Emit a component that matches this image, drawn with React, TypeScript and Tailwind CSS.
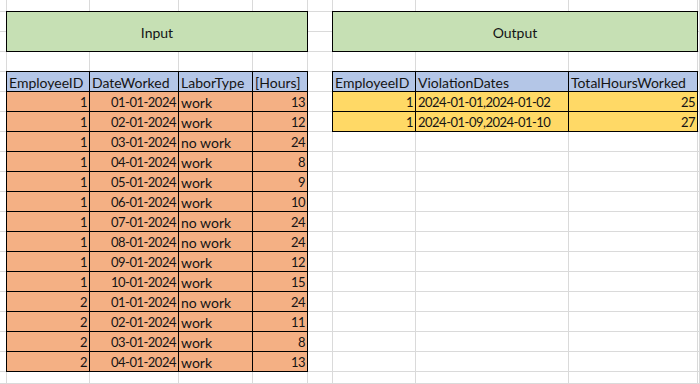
import React from "react";

const inputRows: [number, string, string, number][] = [
  [1, "01-01-2024", "work", 13],
  [1, "02-01-2024", "work", 12],
  [1, "03-01-2024", "no work", 24],
  [1, "04-01-2024", "work", 8],
  [1, "05-01-2024", "work", 9],
  [1, "06-01-2024", "work", 10],
  [1, "07-01-2024", "no work", 24],
  [1, "08-01-2024", "no work", 24],
  [1, "09-01-2024", "work", 12],
  [1, "10-01-2024", "work", 15],
  [2, "01-01-2024", "no work", 24],
  [2, "02-01-2024", "work", 11],
  [2, "03-01-2024", "work", 8],
  [2, "04-01-2024", "work", 13],
];

const outputRows: [number, string, number][] = [
  [1, "2024-01-01,2024-01-02", 25],
  [1, "2024-01-09,2024-01-10", 27],
];

const cell = "border-r border-b border-black px-[2px] pt-px leading-[19px] whitespace-nowrap overflow-hidden";
// Lato digits run wider than the sheet's font, so numbers get a touch smaller and tighter
const num = "text-[13px] tracking-[-0.5px]";

const App: React.FC = () => {
  // background gridlines: 10 columns x 20 rows
  const gridCells = [];
  for (let r = 0; r < 20; r++) {
    for (let c = 0; c < 10; c++) {
      gridCells.push(
        <div
          key={`${r}-${c}`}
          className="border-r border-b border-[#dadada]"
          style={{ gridRow: r + 1, gridColumn: c + 1 }}
        />
      );
    }
  }

  return (
    <div
      className="w-[700px] h-[384px] overflow-hidden bg-white text-[#141414] text-[14px] grid grid-cols-[7px_83px_89px_74px_55px_25px_83px_153px_129px_2px] grid-rows-[12px_repeat(18,20px)_12px]"
      style={{ fontFamily: "Lato, 'Open Sans', sans-serif" }}
    >
      {gridCells}

      {/* Title boxes */}
      <div className="row-start-2 row-end-4 col-start-2 col-end-6 -ml-px -mt-px border border-black bg-[#c6e0b4] flex items-center justify-center pt-px">
        Input
      </div>
      <div className="row-start-2 row-end-4 col-start-7 col-end-10 -ml-px -mt-px border border-black bg-[#c6e0b4] flex items-center justify-center pt-px">
        Output
      </div>

      {/* Input table */}
      <div className="row-start-5 row-end-20 col-start-2 col-end-6 -ml-px -mt-px border-l border-t border-black grid grid-cols-[83px_89px_74px_55px] auto-rows-[20px]">
        {["EmployeeID", "DateWorked", "LaborType", "[Hours]"].map((h) => (
          <div key={h} className={`${cell} bg-[#b4c6e7]`}>
            {h}
          </div>
        ))}
        {inputRows.map((row, i) => (
          <React.Fragment key={i}>
            <div className={`${cell} ${num} bg-[#f4b084] text-right`}>{row[0]}</div>
            <div className={`${cell} ${num} bg-[#f4b084] text-right`}>{row[1]}</div>
            <div className={`${cell} bg-[#f4b084]`}>{row[2]}</div>
            <div className={`${cell} ${num} bg-[#f4b084] text-right`}>{row[3]}</div>
          </React.Fragment>
        ))}
      </div>

      {/* Output table */}
      <div className="row-start-5 row-end-8 col-start-7 col-end-10 -ml-px -mt-px border-l border-t border-black grid grid-cols-[83px_153px_129px] auto-rows-[20px]">
        {["EmployeeID", "ViolationDates", "TotalHoursWorked"].map((h) => (
          <div key={h} className={`${cell} bg-[#b4c6e7]`}>
            {h}
          </div>
        ))}
        {outputRows.map((row, i) => (
          <React.Fragment key={i}>
            <div className={`${cell} ${num} bg-[#ffd966] text-right`}>{row[0]}</div>
            <div className={`${cell} ${num} bg-[#ffd966]`}>{row[1]}</div>
            <div className={`${cell} ${num} bg-[#ffd966] text-right`}>{row[2]}</div>
          </React.Fragment>
        ))}
      </div>
    </div>
  );
};

export default App;
